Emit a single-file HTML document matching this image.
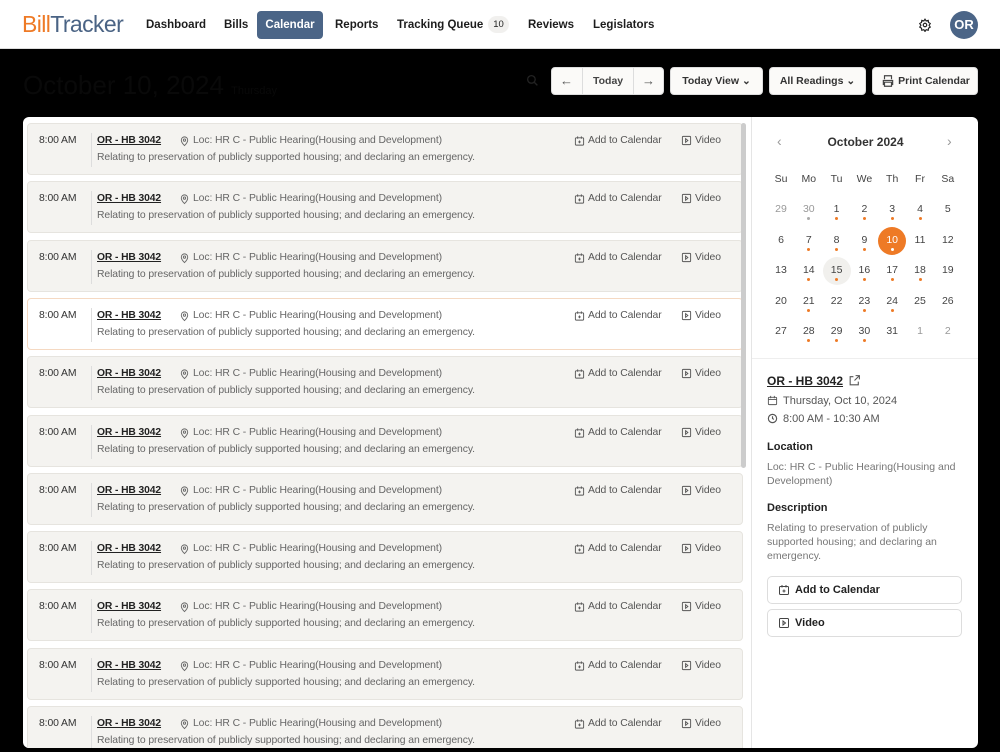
<!DOCTYPE html>
<html><head><meta charset="utf-8"><style>
*{box-sizing:border-box;margin:0;padding:0}
body{width:1000px;height:752px;overflow:hidden;background:#000;font-family:"Liberation Sans",sans-serif;position:relative}
.nav{position:absolute;left:0;top:0;width:1000px;height:49px;background:#fff;border-bottom:1px solid #ddd}
.logo{position:absolute;left:22px;top:11px;font-size:23px;letter-spacing:-0.6px}
.logo .b{color:#ee7a26}.logo .t{color:#4a6384}
.ni{position:absolute;top:18px;font-size:11.5px;line-height:14px;font-weight:bold;color:#1d1d1d}
.cal-act{position:absolute;left:257px;top:11px;width:66px;height:28px;background:#4b6587;border-radius:4px;color:#fff;font-size:11.5px;font-weight:bold;text-align:center;line-height:28px}
.badge{position:absolute;left:488px;top:16px;width:21px;height:17px;background:#f1f0ee;border-radius:9px;font-size:9.5px;text-align:center;line-height:17px;color:#222}
.av{position:absolute;left:950px;top:11px;width:28px;height:28px;border-radius:50%;background:#4b6587;color:#fff;font-weight:bold;font-size:13px;text-align:center;line-height:28px}
.title{position:absolute;left:23px;top:70px;font-size:26px;color:#090909}
.title span{font-size:11px}
.btn{position:absolute;top:67px;height:28px;background:#fbfaf8;border:1px solid #ddd;border-radius:4px;font-size:10.5px;font-weight:bold;color:#333;line-height:26px;text-align:center}
.panel{position:absolute;left:23px;top:117px;width:955px;height:631px;background:#fff;border-radius:6px;overflow:hidden}
.row{position:absolute;left:4px;width:716px;height:52px;background:#f4f3f0;border:1px solid #e6e4df;border-radius:4px}
.row.sel{background:#fff;border-color:#f5d9c2}
.row div{font-size:10.4px;letter-spacing:-0.1px}
.tm{position:absolute;left:11px;top:11px;color:#333}
.sep{position:absolute;left:63px;top:9px;width:1px;height:34px;background:#ddd}
.row .bill{position:absolute;left:69px;top:11px;font-size:10.3px;font-weight:bold;color:#222;text-decoration:underline;letter-spacing:-0.1px}
.loc{position:absolute;top:11px;color:#666}
.desc{position:absolute;left:69px;top:28px;color:#666}
.ac{position:absolute;top:11px;color:#555}
.vd{position:absolute;top:11px;color:#555}
.sb{position:absolute;left:718px;top:6px;width:5px;height:345px;background:#ccc;border-radius:3px}
.side{position:absolute;left:728px;top:0;width:227px;height:640px;border-left:1px solid #e5e5e5}
.mh{position:absolute;top:18px;width:227px;text-align:center;font-size:12px;font-weight:bold;color:#333}
.g{position:absolute;font-size:10.5px;color:#444;text-align:center;width:28px}
.dot{position:absolute;width:4px;height:4px;border-radius:50%;background:#ee7a26}
svg{position:absolute}
</style></head><body>
<div class="nav">
<div class="logo"><span class="b">Bill</span><span class="t">Tracker</span></div>
<div class="ni" style="left:146px">Dashboard</div>
<div class="ni" style="left:224px">Bills</div>
<div class="cal-act">Calendar</div>
<div class="ni" style="left:335px">Reports</div>
<div class="ni" style="left:397px">Tracking Queue</div>
<div class="badge">10</div>
<div class="ni" style="left:528px">Reviews</div>
<div class="ni" style="left:593px">Legislators</div>
<svg style="left:918px;top:18px" width="14" height="14" viewBox="0 0 24 24" fill="none" stroke="#222" stroke-width="2"><circle cx="12" cy="12" r="3"/><path d="M12 2l2 3 3.5-1 .5 3.5 3 2-2 3 2 3-3 2-.5 3.5-3.5-1-2 3-2-3-3.5 1L6 17.5l-3-2 2-3-2-3 3-2 .5-3.5 3.5 1z"/></svg>
<div class="av">OR</div>
</div>
<div class="title">October 10, 2024 <span>Thursday</span></div>
<svg style="left:526px;top:74px" width="13" height="13" viewBox="0 0 24 24" fill="none" stroke="#222" stroke-width="2.5"><circle cx="10" cy="10" r="7"/><path d="M15 15l6 6"/></svg>
<div class="btn" style="left:551px;width:113px"></div>
<div style="position:absolute;left:582px;top:68px;width:1px;height:26px;background:#ddd"></div>
<div style="position:absolute;left:633px;top:68px;width:1px;height:26px;background:#ddd"></div>
<div style="position:absolute;left:560px;top:73px;font-size:13px;color:#555">←</div>
<div style="position:absolute;left:593px;top:75px;font-size:10.5px;font-weight:bold;color:#444">Today</div>
<div style="position:absolute;left:642px;top:73px;font-size:13px;color:#555">→</div>
<div class="btn" style="left:670px;width:93px">Today View ⌄</div>
<div class="btn" style="left:769px;width:97px">All Readings ⌄</div>
<div class="btn" style="left:872px;width:106px;padding-left:18px">Print Calendar</div>
<svg style="left:881px;top:74px" width="14" height="14" viewBox="0 0 24 24" fill="none" stroke="#444" stroke-width="2"><path d="M6 9V3h12v6M6 18H4v-7h16v7h-2M6 14h12v7H6z"/></svg>
<div class="panel">
<div id="rows"></div>
<div class="sb"></div>
<div class="side">
<div style="position:absolute;left:25px;top:16px;color:#999;font-size:14px">‹</div>
<div style="position:absolute;left:195px;top:16px;color:#999;font-size:14px">›</div>
<div class="mh">October 2024</div>
<div id="cal"></div>
<div style="position:absolute;left:0;top:241px;width:227px;height:1px;background:#eee"></div>
<div style="position:absolute;left:15px;top:257px;font-size:12px;font-weight:bold;color:#222;text-decoration:underline">OR - HB 3042</div>
<svg style="left:96px;top:257px" width="13" height="13" viewBox="0 0 24 24" fill="none" stroke="#555" stroke-width="2"><path d="M14 3h7v7M21 3l-9 9M19 14v6H4V5h6"/></svg>
<svg style="left:15px;top:278px" width="11" height="11" viewBox="0 0 24 24" fill="none" stroke="#555" stroke-width="2"><rect x="3" y="5" width="18" height="16" rx="2"/><path d="M3 10h18M8 2v5M16 2v5"/></svg>
<div style="position:absolute;left:31px;top:278px;font-size:11px;color:#555">Thursday, Oct 10, 2024</div>
<svg style="left:15px;top:296px" width="11" height="11" viewBox="0 0 24 24" fill="none" stroke="#555" stroke-width="2.5"><circle cx="12" cy="12" r="9"/><path d="M12 7v5l3 2"/></svg>
<div style="position:absolute;left:31px;top:296px;font-size:11px;color:#555">8:00 AM - 10:30 AM</div>
<div style="position:absolute;left:15px;top:324px;font-size:11px;font-weight:bold;color:#222">Location</div>
<div style="position:absolute;left:15px;top:343px;width:200px;font-size:10.5px;line-height:14px;color:#777">Loc: HR C - Public Hearing(Housing and Development)</div>
<div style="position:absolute;left:15px;top:385px;font-size:11px;font-weight:bold;color:#222">Description</div>
<div style="position:absolute;left:15px;top:404px;width:180px;font-size:10.5px;line-height:14px;color:#777">Relating to preservation of publicly supported housing; and declaring an emergency.</div>
<div style="position:absolute;left:15px;top:459px;width:195px;height:28px;border:1px solid #ddd;border-radius:5px;font-size:11px;font-weight:bold;color:#222;line-height:26px;padding-left:27px">Add to Calendar</div>
<svg style="left:26px;top:467px" width="12" height="12" viewBox="0 0 24 24" fill="none" stroke="#444" stroke-width="2"><rect x="3" y="5" width="18" height="16" rx="2"/><path d="M8 2v5M16 2v5M12 11v6M9 14h6"/></svg>
<div style="position:absolute;left:15px;top:492px;width:195px;height:28px;border:1px solid #ddd;border-radius:5px;font-size:11px;font-weight:bold;color:#222;line-height:26px;padding-left:27px">Video</div>
<svg style="left:26px;top:500px" width="12" height="12" viewBox="0 0 24 24" fill="none" stroke="#444" stroke-width="2"><rect x="3" y="3" width="18" height="18" rx="2"/><path d="M10 8l5 4-5 4z"/></svg>
</div>
</div>
<script>
var r='';for(var i=0;i<11;i++){var t=6+i*58.3;r+='<div class="row'+(i==3?' sel':'')+'" style="top:'+t+'px"><div class="tm">8:00 AM</div><div class="sep"></div><div class="bill">OR - HB 3042</div><svg style="left:151px;top:11px" width="11" height="12" viewBox="0 0 24 24" fill="none" stroke="#666" stroke-width="2"><path d="M12 22s-7-7-7-12a7 7 0 0114 0c0 5-7 12-7 12z"/><circle cx="12" cy="10" r="2.5"/></svg><div class="loc" style="left:165px">Loc: HR C - Public Hearing(Housing and Development)</div><div class="desc">Relating to preservation of publicly supported housing; and declaring an emergency.</div><svg style="left:546px;top:11px" width="11" height="12" viewBox="0 0 24 24" fill="none" stroke="#555" stroke-width="2"><rect x="3" y="5" width="18" height="16" rx="2"/><path d="M8 2v5M16 2v5M12 11v6M9 14h6"/></svg><div class="ac" style="left:560px">Add to Calendar</div><svg style="left:653px;top:11px" width="11" height="11" viewBox="0 0 24 24" fill="none" stroke="#555" stroke-width="2"><rect x="3" y="3" width="18" height="18" rx="2"/><path d="M10 8l5 4-5 4z"/></svg><div class="vd" style="left:667px">Video</div></div>';}
document.getElementById('rows').innerHTML=r;
var c='',h=['Su','Mo','Tu','We','Th','Fr','Sa'];
for(var k=0;k<7;k++)c+='<div class="g" style="left:'+(15+k*27.8)+'px;top:56px;">'+h[k]+'</div>';
var d=[29,30,1,2,3,4,5,6,7,8,9,10,11,12,13,14,15,16,17,18,19,20,21,22,23,24,25,26,27,28,29,30,31,1,2];
var dots=[2,3,4,5,8,9,10,11,15,16,17,18,19,22,24,25,29,30,31];
for(var j=0;j<35;j++){var x=15+(j%7)*27.8,y=86+Math.floor(j/7)*30.5;var col=(j<2||j>32)?'#999':'#444';
if(j==11)c+='<div style="position:absolute;left:'+(x)+'px;top:'+(y-7)+'px;width:28px;height:28px;border-radius:50%;background:#ee7a26"></div>';
if(j==16)c+='<div style="position:absolute;left:'+(x)+'px;top:'+(y-7)+'px;width:28px;height:28px;border-radius:50%;background:#f1f0ed"></div>';
c+='<div class="g" style="left:'+x+'px;top:'+y+'px;color:'+(j==11?'#fff':col)+'">'+d[j]+'</div>';
if(dots.indexOf(j)>=0||j==1)c+='<div class="dot" style="left:'+(x+12.5)+'px;top:'+(y+14)+'px;background:'+(j==1?'#aaa':j==11?'#fff':'#ee7a26')+';width:3px;height:3px"></div>';}
document.getElementById('cal').innerHTML=c;
</script>
</body></html>
